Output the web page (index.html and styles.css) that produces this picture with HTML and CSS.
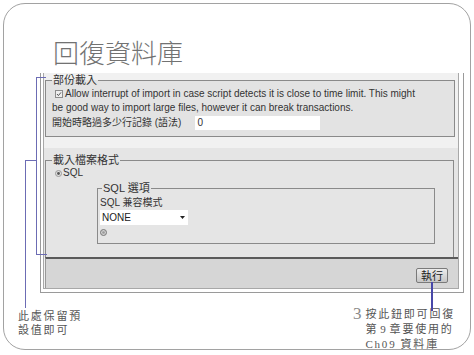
FILE: index.html
```html
<!DOCTYPE html>
<html lang="zh-Hant">
<head>
<meta charset="utf-8">
<title>回復資料庫</title>
<link rel="stylesheet" href="styles.css">
</head>
<body>
<div class="slide">
  <h1 class="title">回復資料庫</h1>
  <div class="panel">
    <div class="inner">
      <fieldset class="fs fs1">
        <legend>部份載入</legend>
        <div class="row"><span class="chk"><svg width="8" height="8" viewBox="0 0 8 8"><rect x="0.5" y="0.5" width="7" height="7" fill="#eeeeee" stroke="#8c8c8c"/><path d="M2 4 L3.4 5.6 L6 2.4" fill="none" stroke="#555" stroke-width="1"/></svg></span>Allow interrupt of import in case script detects it is close to time limit. This might</div>
        <div class="row">be good way to import large files, however it can break transactions.</div>
        <div class="row row-input">開始時略過多少行記錄 (語法)<span class="txt">0</span></div>
      </fieldset>
      <div class="sec2">
        <fieldset class="fs fs2">
          <legend>載入檔案格式</legend>
          <div class="row"><span class="radio"><svg width="7" height="7" viewBox="0 0 7 7"><circle cx="3.5" cy="3.5" r="3" fill="#e0e0e0" stroke="#9a9a9a"/><circle cx="3.5" cy="3.5" r="1.4" fill="#555"/></svg></span>SQL</div>
          <fieldset class="fs fs3">
            <legend>SQL 選項</legend>
            <div class="row">SQL 兼容模式</div>
            <div class="select"><span>NONE</span><svg width="5" height="3" viewBox="0 0 5 3"><polygon points="0,0 5,0 2.5,3" fill="#222"/></svg></div>
            <div class="help"><svg width="7" height="7" viewBox="0 0 7 7"><circle cx="3.5" cy="3.5" r="3" fill="#cfcfcf" stroke="#777"/><circle cx="3.5" cy="3.5" r="1.3" fill="#999"/></svg></div>
          </fieldset>
        </fieldset>
      </div>
      <div class="bar"><button class="go" type="button">執行</button></div>
    </div>
  </div>
  <div class="notes">
    <p class="note-left">此處保留預<br>設值即可</p>
    <div class="note-right"><span class="step">3</span><p class="note-text">按此鈕即可回復<br>第 9 章要使用的<br>Ch09&nbsp; 資料庫</p></div>
  </div>
  <span class="ln a-top"></span>
  <span class="ln a-v"></span>
  <span class="ln a-bot"></span>
  <span class="ln b-h"></span>
  <span class="ln b-v"></span>
  <span class="ln c-v"></span>
</div>
</body>
</html>
```
FILE: styles.css
```css
* { box-sizing: border-box; }
html, body { margin: 0; padding: 0; background: #fff; }
body {
  width: 474px;
  height: 355px;
  overflow: hidden;
  font-family: "Liberation Sans", "Noto Sans CJK TC", sans-serif;
}
.slide {
  position: relative;
  margin: 3px 0 0 3px;
  width: 468px;
  height: 347px;
  border: 1px solid #a2a2a2;
  border-radius: 22px;
}
.title {
  margin: 0;
  padding: 33px 0 0 49px;
  font-family: "Noto Sans CJK TC", sans-serif;
  font-weight: 300;
  font-size: 26px;
  line-height: 30px;
  color: #727272;
}
.panel {
  margin: 6px 0 0 36px;
  width: 424px;
  border: 1px solid #9a9a9a;
  border-top: 0;
  padding: 0 4px 3px 2px;
  background: #fff;
}
.inner {
  border: 1px solid #a8a8a8;
  border-top: 0;
  background: #f1f1f1;
  padding-top: 1px;
}
.fs {
  margin: 0;
  min-width: 0;
  border: 1px solid #8a8a8a;
  font-size: 10px;
  color: #333;
}
.fs legend {
  padding: 0 1px;
  font-size: 11px;
  line-height: 12px;
  color: #333;
}
.row {
  line-height: 14px;
  height: 14px;
  white-space: nowrap;
}
.fs1 {
  margin: 0 3px 11px 1px;
  padding: 1px 6px 5px 6px;
  background: #e3e3e3;
}
.chk {
  display: inline-block;
  width: 8px;
  height: 8px;
  margin: 0 2px 0 3px;
  vertical-align: -1px;
}
.chk svg, .radio svg, .help svg { display: block; }
.row-input {
  display: flex;
  align-items: center;
  height: 16px;
}
.txt {
  display: inline-block;
  margin-left: 14px;
  width: 125px;
  height: 14px;
  line-height: 14px;
  padding-left: 2px;
  background: #fff;
}
.sec2 {
  background: #e5e5e5;
  padding-top: 6px;
}
.fs2 {
  margin: 0 4px 0 1px;
  padding: 0 6px 13px 6px;
  border-bottom: 0;
}
.radio {
  display: inline-block;
  width: 7px;
  height: 7px;
  margin: 0 1px 0 3px;
  vertical-align: -1px;
}
.fs3 {
  margin: 2px 0 0 45px;
  width: 338px;
  padding: 2px 2px 4px 2px;
}
.fs3 legend { margin-left: 2px; }
.select {
  display: flex;
  align-items: center;
  justify-content: space-between;
  width: 88px;
  height: 15px;
  padding: 0 3px 0 2px;
  background: #fff;
  color: #222;
}
.help {
  display: flex;
  align-items: center;
  height: 14px;
}
.bar {
  display: flex;
  justify-content: flex-end;
  height: 31px;
  margin-left: 1px;
  padding: 9px 10px 0 0;
  border-top: 2px solid #5a5a5a;
  border-left: 1px solid #999;
  background: #d6d6d6;
}
.go {
  width: 32px;
  height: 15px;
  padding: 0;
  border: 1px solid #7a7a7a;
  border-radius: 2px;
  background: linear-gradient(#ececec, #c6c6c6);
  font-family: "Noto Sans CJK TC", sans-serif;
  font-size: 11px;
  line-height: 13px;
  color: #222;
}
.notes {
  display: flex;
  align-items: flex-start;
  margin-top: 14px;
}
.note-left {
  margin: 0 0 0 14px;
  padding-top: 2px;
  font-family: "Liberation Sans", "Noto Sans CJK TC", sans-serif;
  font-size: 11px;
  line-height: 14px;
  letter-spacing: 1.8px;
  color: #555;
}
.note-right {
  display: flex;
  align-items: flex-start;
  margin: 0 15px 0 auto;
}
.step {
  margin-right: 4px;
  font-family: "Liberation Serif", serif;
  font-size: 17px;
  line-height: 13px;
  color: #8a8a8a;
}
.note-text {
  margin: 0;
  font-family: "Liberation Serif", "Noto Sans CJK TC", serif;
  font-size: 11px;
  line-height: 15px;
  letter-spacing: 1.8px;
  word-spacing: -2.5px;
  color: #555;
}
.ln {
  position: absolute;
  background: #6c6cb4;
}
.a-top { left: 32px; top: 73px; width: 10px; height: 1px; }
.a-v { left: 32px; top: 73px; width: 1px; height: 178px; }
.a-bot { left: 32px; top: 250px; width: 11px; height: 1px; }
.b-h { left: 21px; top: 156px; width: 12px; height: 1px; }
.b-v { left: 21px; top: 156px; width: 1px; height: 148px; }
.c-v { left: 427px; top: 278px; width: 2px; height: 29px; background: #4848a8; }
```
